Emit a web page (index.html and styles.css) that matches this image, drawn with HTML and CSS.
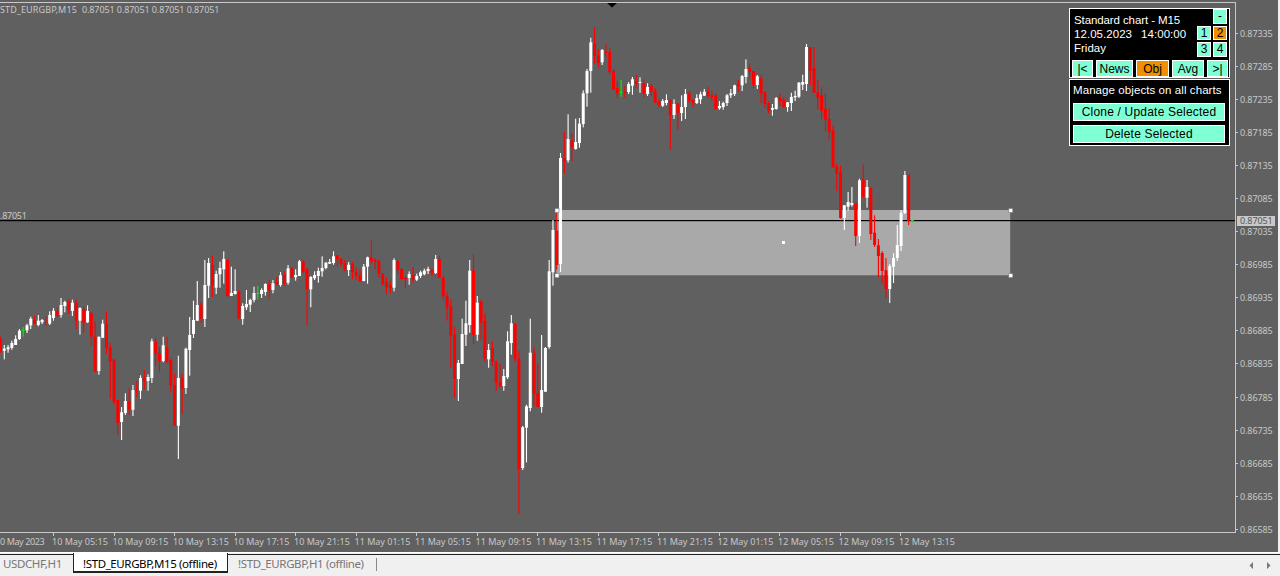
FILE: index.html
```html
<!DOCTYPE html>
<html lang="en">
<head>
    <meta charset="UTF-8">
    <meta name="viewport" content="width=device-width, initial-scale=1.0">
    <title>!STD_EURGBP,M15 (offline)</title>
    <link rel="stylesheet" href="styles.css">
</head>
<body>
    <div class="chart">
        <div class="plot">
            <svg class="candles" width="1235" height="530" viewBox="0 3 1235 530">
                <rect x="556.5" y="210" width="453.7" height="65.3" fill="#a9a9a9"/>
                <rect x="0" y="220" width="1235" height="1.2" fill="#000"/>
                <path d="M607 3h10l-5 4.5z" fill="#000"/>
                <g id="bars"></g>
                <g fill="#fff" stroke="#777" stroke-width="0.6">
                    <rect x="555" y="208.5" width="4" height="4"/>
                    <rect x="555" y="273.7" width="4" height="4"/>
                    <rect x="1008.8" y="208.5" width="4" height="4"/>
                    <rect x="1008.8" y="273.7" width="4" height="4"/>
                </g>
                <rect x="782" y="241" width="3" height="3" fill="#fff"/>
            </svg>
            <div class="title"><span>STD_EURGBP,M15</span><span class="ohlc">0.87051 0.87051 0.87051 0.87051</span></div>
            <div class="line-label">.87051</div>

            <div class="panel">
                <div class="box">
                    <div class="head">
                        <div class="info">
                            <div class="l1">Standard chart - M15</div>
                            <div class="l2"><span>12.05.2023</span><span>14:00:00</span></div>
                            <div class="l3">Friday</div>
                        </div>
                        <div class="small">
                            <span></span><div class="btn">-</div>
                            <div class="btn">1</div><div class="btn on">2</div>
                            <div class="btn">3</div><div class="btn">4</div>
                        </div>
                    </div>
                    <div class="nav">
                        <div class="btn">|&lt;</div>
                        <div class="btn">News</div>
                        <div class="btn on">Obj</div>
                        <div class="btn">Avg</div>
                        <div class="btn">&gt;|</div>
                    </div>
                </div>
                <div class="box manage">
                    <div class="l4">Manage objects on all charts</div>
                    <div class="btn">Clone / Update Selected</div>
                    <div class="btn">Delete Selected</div>
                </div>
            </div>
        </div>
        <div class="prices">
            <div class="price-list">
                <div>0.87335</div>
                <div>0.87285</div>
                <div>0.87235</div>
                <div>0.87185</div>
                <div>0.87135</div>
                <div>0.87085</div>
                <div>0.87035</div>
                <div>0.86985</div>
                <div>0.86935</div>
                <div>0.86885</div>
                <div>0.86835</div>
                <div>0.86785</div>
                <div>0.86735</div>
                <div>0.86685</div>
                <div>0.86635</div>
                <div>0.86585</div>
            </div>
            <div class="current">0.87051</div>
        </div>
        <div class="times">
            <div class="cut">0 May 2023</div>
            <div>10 May 05:15</div>
            <div>10 May 09:15</div>
            <div>10 May 13:15</div>
            <div>10 May 17:15</div>
            <div>10 May 21:15</div>
            <div>11 May 01:15</div>
            <div>11 May 05:15</div>
            <div>11 May 09:15</div>
            <div>11 May 13:15</div>
            <div>11 May 17:15</div>
            <div>11 May 21:15</div>
            <div>12 May 01:15</div>
            <div>12 May 05:15</div>
            <div>12 May 09:15</div>
            <div>12 May 13:15</div>
        </div>
    </div>
    <div class="tabs">
        <div class="tab first">USDCHF,H1</div>
        <div class="tab active">!STD_EURGBP,M15 (offline)</div>
        <div class="tab last">!STD_EURGBP,H1 (offline)</div>
        <div class="arrows">
            <svg width="28" height="10" viewBox="0 0 28 10"><path d="M5 1v7L1.5 4.5zM19 1v7l3.5-3.5z" fill="#777"/></svg>
        </div>
    </div>
    <script src="script.js"></script>
</body>
</html>
```
FILE: styles.css
```css
*{
    padding: 0;
    margin: 0;
    box-sizing: border-box;
}

body{
    width: 1280px;
    height: 576px;
    overflow: hidden;
    background-color: #f0f0f0;
    font-family: "Noto Sans", sans-serif;
}
.chart {
    display: grid;
    grid-template-columns: 1236px 42px;
    grid-template-rows: 531px 19px;
    width: 1278px;
    height: 552px;
    padding-top: 2px;
    background-color: #606060;
    color: #c8c8c8;
    font-size: 9px;
    overflow: hidden;
}
.plot {
    position: relative;
    border-top: 1px solid #c8c8c8;
    border-right: 1px solid #c8c8c8;
    border-bottom: 1px solid #c8c8c8;
    overflow: hidden;
}
.candles {
    display: block;
}
.title {
    position: absolute;
    left: 0;
    top: 1px;
    display: flex;
    gap: 5px;
    line-height: 12px;
    white-space: nowrap;
    letter-spacing: 0.12px;
}
.ohlc {
    letter-spacing: -0.09px;
}
.line-label {
    position: absolute;
    left: 0;
    top: 206.5px;
    line-height: 12px;
    letter-spacing: -0.25px;
}

/* axes */
.prices {
    position: relative;
    padding-top: 25.5px;
    letter-spacing: -0.1px;
}
.price-list div {
    display: flex;
    align-items: center;
    height: 12px;
    margin-bottom: 21.05px;
}
.price-list div::before {
    content: "";
    width: 2px;
    height: 1px;
    margin-right: 2px;
    background-color: #c8c8c8;
}
.current {
    position: absolute;
    left: 0.5px;
    top: 213.5px;
    width: 38.5px;
    height: 10.5px;
    padding-left: 3.5px;
    line-height: 10.5px;
    background-color: #c8c8c8;
    color: #555;
}
.times {
    display: flex;
    margin-left: -8.5px;
}
.times div {
    flex: 0 0 60.5px;
    line-height: 12px;
    white-space: nowrap;
}
.times div::before {
    content: "";
    display: block;
    width: 1px;
    height: 3px;
    margin-left: 1px;
    background-color: #c8c8c8;
}
.times .cut {
    padding-left: 8.5px;
    letter-spacing: -0.4px;
}
.times .cut::before {
    background: none;
}

/* control panel */
.panel {
    position: absolute;
    left: 1069px;
    top: 5px;
    width: 161px;
    font-family: "Liberation Sans", Arial, sans-serif;
    font-size: 11.5px;
    color: #fff;
}
.box {
    height: 70px;
    border: 1px solid #fff;
    background-color: #000;
}
.manage {
    height: 67px;
    margin-top: 1px;
    padding: 3px 4px 0 3px;
}
.head {
    display: flex;
    justify-content: space-between;
    height: 51px;
}
.info {
    padding: 4px 0 0 4px;
    line-height: 14px;
    white-space: nowrap;
}
.l1 {
    letter-spacing: -0.1px;
}
.l2 {
    display: flex;
    gap: 9px;
    letter-spacing: 0.05px;
}
.small {
    display: grid;
    grid-template-columns: 14px 14px;
    grid-auto-rows: 14.5px;
    gap: 2px;
    margin-right: 2px;
}
.btn {
    display: flex;
    justify-content: center;
    align-items: center;
    border: 1px solid #fff;
    background-color: #7fffd4;
    color: #000;
    font-size: 12px;
    line-height: 12px;
    white-space: nowrap;
}
.btn.on {
    background-color: #f09000;
}
.nav {
    display: grid;
    grid-template-columns: 21px 37px 33px 32px 21px;
    justify-content: space-between;
    height: 17px;
    padding: 0 1px 0 2px;
}
.manage .btn {
    height: 18px;
    margin-bottom: 4px;
    letter-spacing: 0.2px;
}
.l4 {
    height: 20px;
    line-height: 15px;
    letter-spacing: 0.08px;
    white-space: nowrap;
}

/* window tabs */
.tabs {
    display: flex;
    height: 24px;
    border-top: 1px solid #fff;
    background-color: #f0f0f0;
    color: #777;
    font-size: 11.5px;
    letter-spacing: -0.39px;
    line-height: 17px;
    box-shadow: inset 0 1px #f0f0f0, inset 0 2px #222;
}
.tab {
    height: 20px;
    padding-top: 2px;
    white-space: nowrap;
}
.first {
    width: 73px;
    padding-left: 3px;
}
.active {
    width: 155px;
    padding-left: 9px;
    border: solid #222;
    border-width: 0 1px 2px 1px;
    background-color: #fff;
    color: #000;
}
.last {
    width: 149px;
    padding-left: 10px;
    background: linear-gradient(#888, #888) right 5px / 1px 13px no-repeat;
}
.arrows {
    margin-left: auto;
    padding-top: 5px;
    margin-right: 4px;
}
```
FILE: script.js
```js
// colour, high, body top, body bottom, low
const data = `r 336.7 339.5 351.7 352.7|w 345 348.7 350.7 359.3|w 345 347.3 349.3 352.7|w 340.7 343 348 349.7
w 335.3 339 345 345|w 329 330.7 339 340|g 327 330 331 336.7|w 323.7 325.3 330.3 333
w 316.7 318.7 325.3 329|r 316 320 324 324.7|w 315 320.7 325 326.3|w 319 320 322.3 324
r 316.7 321.3 322.3 326|w 311.3 315 323.7 325|w 308 310.7 318 320.7|r 307.3 311 315.7 317.3
w 298 305 315 317.7|w 300.7 302 306 312.3|r 299 301.3 310 314|w 299.7 302.7 311 316
r 299.3 302.7 320.7 329.3|w 307.3 308 320.7 334.7|r 306.7 309 322.7 332.7|w 305.3 311 322.3 323
r 312.3 312.7 336.7 346|r 321.3 336.7 371 372.3|w 336.7 336.7 371 374.7|w 319.7 323.7 337.7 338
r 311.3 323.3 348 354|r 342.7 347.3 361.7 399|r 359 359.7 402 405|r 400 400 423 435
w 407 412.3 422 440|w 393.3 401 413 415|r 388 401 409.7 415|w 385 390 409.7 416
r 381 389.7 391 397|w 375.3 378 390.7 399|r 370 378 381 389.7|w 374.3 377 381 390.7
w 338.7 341.3 378 383|r 337.7 342 353.7 366|r 347 353 361 371.7|w 336.7 345.3 361 362.3
r 336.7 347.3 362 363.7|r 358.7 360 385.7 392.7|r 374.3 385 425.7 425.7|w 355.7 378 425.7 459
r 374 378 388.7 413.7|w 347.7 348.7 388 394|w 317 335 350 375.7|w 300.7 320 334 338
w 281 305 320.7 320.7|r 302 304.7 318.7 323|w 260 285 319 327|w 258 263 285.7 298
r 255.3 265 285.7 297|w 270.7 274 287.7 294|w 261.7 268 274.3 287.7|w 251.3 259 269.3 283.7
r 258.7 260 296 297|w 266.7 293 296 296|w 269.3 291 294 294.7|r 290 291.7 318.3 319.7
w 303.3 306 319 324.7|w 290 304 307.3 310|w 298.7 300 304.7 312|w 286.7 293 300 302.3
g 286 293 294 299.3|w 288.3 290 294 298|w 283.3 284 292 295.7|r 279.3 284.3 290 299.3
w 280 283.3 290 293.3|r 276.7 281.7 284.3 286|w 272 275.3 285 286.7|r 271.3 274.7 283.3 285.7
w 265 268.3 282.7 284.7|r 267.3 268.3 277.7 278|w 269.3 275 277.3 280.7|w 260 261.3 276 276
r 260 261.7 272 273.3|r 268.3 268.7 289.3 325.3|w 276 277 289.3 307.3|w 271.3 275 278.3 280
w 267.7 271 276 282.7|w 256.3 268 271.3 276.7|w 262 262.7 268 269.3|w 259 262 263.7 264
w 251.3 256.3 263 264.7|r 255 255.3 259.3 266|r 258 258.7 264 267.3|r 260 263 269.7 271.3
w 262 264.7 270 276|r 262 263.7 272 279|r 267.3 271.7 275.7 279.3|r 270 275.3 281.7 281.7
w 264 266.7 281 281.3|w 256.7 257.3 266.7 283.7|r 240 257.3 261.3 263.7|r 258.3 259.7 262 269.3
r 259.3 261.3 273.7 278|r 273.3 273.3 284 285.7|r 277.3 281.7 287.3 294|r 281 285 288 293.3
w 258.3 260 287.7 291.3|r 259.7 261.3 270 274|r 268 269 279 280.7|r 276.7 277.3 279 288
w 271.3 274 278 284.7|r 266.7 275 279.7 283.3|w 273.7 276 279.7 281|w 270.7 272.3 276 278
w 268.7 270.7 274.3 275.3|w 266.7 269 271 274|r 269 269.7 273 275.7|w 255 259 273 274
r 256 259 277.7 278|r 276 277.7 296 300|r 292.3 295.7 307.3 320.7|r 299 306.3 335.7 367.7
r 327 334.7 379 397|w 360 363 379 401|w 318.7 334 364 364|w 300.7 323.3 334.7 346
w 260 270.7 325 332.7|r 254 270.3 334.7 344.3|w 296 302.7 334.7 340.7|r 299.7 301.3 322.7 339.7
r 313.3 320.7 358.3 362|w 344 350 359.3 367.7|r 341.3 348 362 366|r 359.7 362 382.7 390.7
r 364 382 386 387.7|w 369 376 386 390.7|w 331.3 341.3 377.3 379|w 315 323.3 343 354.7
r 323.3 323.7 359 362.7|r 351 358.7 469 514.3|w 426 427.3 468 470|w 404.7 406.3 427.7 462.3
w 318.7 352.7 408 411.3|r 347.3 352.7 394 406.3|r 363.3 393.3 407 407|w 335 390 407 412.7
w 347 348 391.7 392|w 260 271.3 347 348.7|w 220 230 272.3 285.7|r 210 230.7 265 269.7
w 153 158 264 272|r 132 158 161.3 173|w 114.3 139 160.3 162.7|r 133 140.7 147.3 161.3
w 118.7 142 149 149.7|w 118 123.7 143 147.7|w 90.3 93.3 124 127.3|w 69 71 93.3 106.7
w 37.7 42.3 71 92.7|r 27 43.3 56 64|r 49.3 55.7 63 67.7|w 49 50 62.3 65
r 43.7 51.3 53 56.7|r 48 52 72 74.7|r 69 71 89.7 89.7|r 81 88 93.3 98.3
g 80 91.7 93 96.7|r 85.7 91.3 92.7 98|w 82 84 92 94|w 77 79.3 85.7 94.7
r 74.7 81.3 83.7 88|w 77.3 82 83 92.7|r 79.7 83.3 93.3 98|w 83.3 87 94 96
r 84 86 91.7 96.3|r 88 90.7 102.7 103.3|r 99 101.7 105.3 107.7|w 99 101 105.7 107
w 94.3 100 103 105.3|r 99.3 100 115.3 149.3|w 99.3 104 115 119|r 103.3 103.7 113 129.7
w 95.3 107 113 121|w 89 94 107 119|r 90.7 93 101 103|r 99 100 103 107.7
w 94.3 98 103 104|w 91.7 94.3 99.3 104|w 89 91.7 95.7 96|r 87 91.3 96 98.3
r 90.7 95.3 97.3 101|r 93.3 95.3 109 109.7|w 101 106 108.3 109.7|w 101.7 103 107 109.7
w 94 95.3 103 106|w 89 93.3 95.3 98|w 84.7 85.3 94 96|r 80 84 86 91.7
w 75 76 85.3 91|w 59.3 69 77 83.3|r 63.3 68.3 72 79|r 71 71 85 88
w 75 76.3 85 89|r 74.7 78.3 93.3 103|r 91 92 104 108|r 101.3 103 111 113.7
w 104 108 109.7 115.7|w 97 98 109 109.7|r 93.3 97.3 101.3 106|r 97.3 100 107 107.7
w 102 102.3 107 111.7|w 92.7 97 103 111|w 90.7 96 97.3 101|w 82 82.7 96.7 98
w 74.7 82 84.7 90|w 44 47 84 91|r 47 47 71 85|r 47 68 92.7 93
r 79.7 92 98 109.7|r 87 95.3 110.7 119|r 93.3 108.7 119.7 131.3|r 108 119 132 139.7
r 125.3 130 167 168|r 163.7 166 173.7 191|r 165.7 172 218 218.7|w 205 205.3 218 230
w 192 202 206.7 210.7|w 187 203 205 206.7|r 203 203 236 246|w 178.7 180.3 236 243
r 164.3 179.3 197 197.7|w 180 187 197.7 207.7|r 187.3 188 234 240|r 215.3 232.7 245 247
r 239 245.3 256 277|r 251.3 253 271 283.7|r 258 270.3 289 297.7|w 264 266 289 303
w 253.3 258 266.7 283|w 225 245 258 261|w 210 212.7 246 251|w 171 175 213 214
r 174.7 175 221 225|g 220 220 221.2 221.2`;

const colors = { r: '#ff0000', w: '#ffffff', g: '#00f000' };
const step = 3.784;

let out = '';
data.split(/[|\n]/).forEach((row, i) => {
    const [c, high, top, bottom, low] = row.split(' ');
    const x = 0.5 + i * step;
    out += `<g fill="${colors[c]}">` +
        `<rect x="${(x - 0.55).toFixed(2)}" y="${high}" width="1.1" height="${(low - high).toFixed(1)}"/>` +
        `<rect x="${(x - 1.5).toFixed(2)}" y="${top}" width="3" height="${(bottom - top).toFixed(1)}"/></g>`;
});
document.getElementById('bars').innerHTML = out;
```
